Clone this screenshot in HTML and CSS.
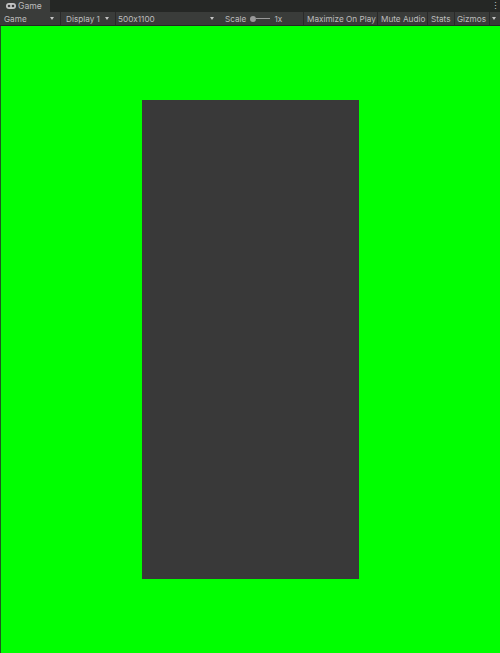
FILE: index.html
```html
<!DOCTYPE html>
<html>
<head>
<meta charset="utf-8">
<link rel="stylesheet" href="styles.css">
</head>
<body>
<div class="window">
  <div class="tabbar">
    <div class="tab">
      <svg class="tab-icon" width="10" height="6" viewBox="0 0 10 6"><rect x="0" y="0" width="10" height="6" rx="3" fill="#c4c4c4"/><circle cx="3" cy="3" r="1.3" fill="#3c3c3c"/><circle cx="7" cy="3" r="1.3" fill="#3c3c3c"/></svg>
      <span>Game</span>
    </div>
    <div class="tab-spacer"></div>
    <div class="menu-dots">⋮</div>
  </div>
  <div class="toolbar">
    <div class="tool dd w-game"><span>Game</span><span class="caret"></span></div>
    <div class="tool dd w-display"><span>Display 1</span><span class="caret"></span></div>
    <div class="tool dd w-res"><span>500x1100</span><span class="caret"></span></div>
    <div class="tool w-scale"><span>Scale</span><span class="slider"><span class="knob"></span><span class="track"></span></span><span>1x</span></div>
    <div class="tool w-max"><span>Maximize On Play</span></div>
    <div class="tool w-mute"><span>Mute Audio</span></div>
    <div class="tool w-stats"><span>Stats</span></div>
    <div class="tool w-gizmos"><span>Gizmos</span></div>
    <div class="tool w-gcaret"><span class="caret"></span></div>
  </div>
  <div class="viewport">
    <div class="screen"></div>
  </div>
</div>
</body>
</html>
```
FILE: styles.css
```css
html, body {
  margin: 0;
  padding: 0;
  width: 500px;
  height: 653px;
  overflow: hidden;
  background: #282828;
}
.window {
  display: flex;
  flex-direction: column;
  width: 500px;
  height: 653px;
  font-family: Inter, "Noto Sans", sans-serif;
  font-size: 8.2px;
  font-feature-settings: "calt" 0;
  font-variant-ligatures: none;
  color: #bdbdbd;
}
.tabbar {
  height: 12px;
  display: flex;
  align-items: stretch;
  background: #252725;
  flex: none;
}
.tab {
  width: 50px;
  background: #3a3c3a;
  display: flex;
  align-items: center;
  gap: 2px;
  padding-left: 6px;
  box-sizing: border-box;
  font-size: 8.6px;
}
.tab-icon { display: block; }
.tab-spacer { flex: 1; }
.menu-dots {
  width: 10px;
  text-align: center;
  line-height: 12px;
  font-size: 9px;
  color: #c4c4c4;
}
.toolbar {
  height: 14px;
  display: flex;
  background: #3a3c3a;
  flex: none;
  box-sizing: border-box;
  border-bottom: 1px solid #252525;
}
.tool {
  display: flex;
  align-items: center;
  gap: 4px;
  padding: 0 4px;
  border-right: 1px solid #2a2a2a;
  box-sizing: border-box;
  white-space: nowrap;
}
.dd { justify-content: space-between; }
.caret {
  width: 0;
  height: 0;
  border-left: 2.5px solid transparent;
  border-right: 2.5px solid transparent;
  border-top: 3px solid #c4c4c4;
  margin-right: 2px;
}
.w-game { width: 61px; }
.w-display { width: 55px; padding-left: 5px; }
.w-res { width: 104px; padding-left: 2px; border-right: none; }
.w-scale { width: 84px; padding-left: 5px; gap: 4px; }
.w-max { width: 74px; padding-left: 3px; }
.w-mute { width: 50px; padding-left: 3px; }
.w-stats { width: 27px; padding-left: 3px; }
.w-gizmos { width: 35px; padding-left: 2px; }
.w-gcaret { width: 10px; padding-left: 2px; border-right: none; }
.w-gcaret .caret { margin: 0; }
.slider {
  display: flex;
  align-items: center;
  width: 20px;
}
.knob {
  width: 6px;
  height: 6px;
  border-radius: 50%;
  background: #999;
  flex: none;
}
.track {
  flex: 1;
  height: 1px;
  background: #999;
}
.viewport {
  flex: 1;
  background: #00ff00;
  border-left: 1px solid #1e5a1e;
  display: flex;
  flex-direction: column;
  align-items: flex-start;
  padding: 74px 0 0 141px;
}
.screen {
  width: 217px;
  height: 479px;
  background: #393939;
}
```
